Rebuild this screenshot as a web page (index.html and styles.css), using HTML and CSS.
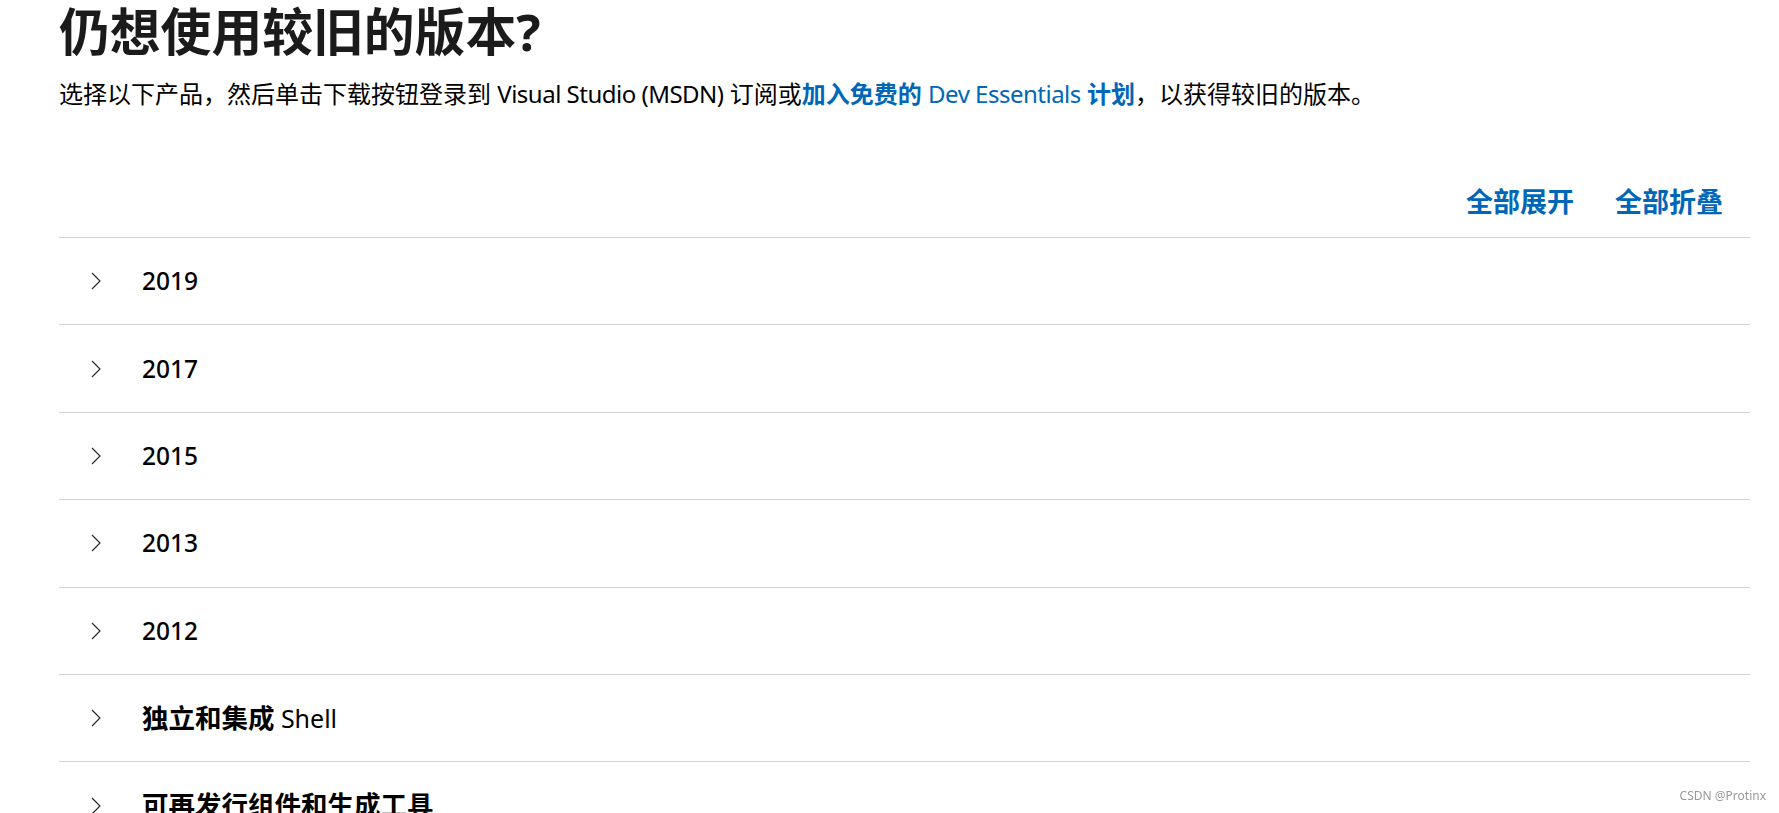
FILE: index.html
```html
<!DOCTYPE html>
<html lang="zh-CN">
<head>
<meta charset="utf-8">
<title>仍想使用较旧的版本?</title>
<link rel="stylesheet" href="styles.css">
</head>
<body>
<main class="page">
  <h1 class="title">仍想使用较旧的版本?</h1>
  <p class="intro">选择以下产品，然后单击下载按钮登录到 <span class="latin">Visual Studio (MSDN)</span> 订阅或<a class="link" href="#"><b class="cjk-bold">加入免费的</b> <span class="latin">Dev Essentials</span> <b class="cjk-bold">计划</b></a>，以获得较旧的版本。</p>

  <div class="toolbar">
    <a class="tool-link" href="#">全部展开</a>
    <a class="tool-link" href="#">全部折叠</a>
  </div>

  <ul class="list">
    <li class="row"><svg class="chev" viewBox="0 0 10 18" width="10" height="18"><polyline points="1,1 9,9 1,17"/></svg><span class="row-title">2019</span></li>
    <li class="row"><svg class="chev" viewBox="0 0 10 18" width="10" height="18"><polyline points="1,1 9,9 1,17"/></svg><span class="row-title">2017</span></li>
    <li class="row"><svg class="chev" viewBox="0 0 10 18" width="10" height="18"><polyline points="1,1 9,9 1,17"/></svg><span class="row-title">2015</span></li>
    <li class="row"><svg class="chev" viewBox="0 0 10 18" width="10" height="18"><polyline points="1,1 9,9 1,17"/></svg><span class="row-title">2013</span></li>
    <li class="row"><svg class="chev" viewBox="0 0 10 18" width="10" height="18"><polyline points="1,1 9,9 1,17"/></svg><span class="row-title">2012</span></li>
    <li class="row"><svg class="chev" viewBox="0 0 10 18" width="10" height="18"><polyline points="1,1 9,9 1,17"/></svg><span class="row-title"><b class="row-cjk">独立和集成</b> <span class="row-latin">Shell</span></span></li>
    <li class="row"><svg class="chev" viewBox="0 0 10 18" width="10" height="18"><polyline points="1,1 9,9 1,17"/></svg><span class="row-title"><b class="row-cjk">可再发行组件和生成工具</b></span></li>
  </ul>
</main>
<div class="watermark">CSDN @Protinx</div>
</body>
</html>
```

FILE: styles.css
```css
html, body {
  margin: 0;
  padding: 0;
  overflow: hidden;
  background: #ffffff;
}

body {
  font-family: "Noto Sans", "Noto Sans CJK SC", sans-serif;
  color: #000000;
}

.page {
  padding: 0 29px 0 59px;
}

.title {
  margin: 0;
  font-size: 50.8px;
  line-height: 64px;
  font-weight: 700;
  color: #1b1b1b;
}

.intro {
  margin: 12px 0 0;
  font-size: 24px;
  line-height: 36px;
  font-weight: 400;
  color: #000000;
}

.latin {
  letter-spacing: -0.5px;
}

.link {
  color: #0067b8;
  text-decoration: none;
}

.cjk-bold {
  font-weight: 700;
}

.toolbar {
  display: flex;
  justify-content: flex-end;
  gap: 41px;
  margin-top: 72px;
  padding: 0 27px 17px 0;
  border-bottom: 1px solid #d2d2d2;
}

.tool-link {
  font-size: 27px;
  line-height: 36px;
  font-weight: 700;
  color: #0067b8;
  text-decoration: none;
}

.list {
  list-style: none;
  margin: 0;
  padding: 0;
}

.row {
  display: flex;
  align-items: center;
  height: 86.4px;
  padding-left: 32px;
  border-bottom: 1px solid #d2d2d2;
}

.chev {
  flex: none;
  fill: none;
  stroke: #2b2b2b;
  stroke-width: 1.2;
}

.row-title {
  margin-left: 41px;
  font-size: 24.5px;
  line-height: 32px;
  font-weight: 500;
  color: #000000;
}

.row-cjk {
  font-size: 26.5px;
  font-weight: 700;
}

.row-latin {
  font-weight: 400;
  font-size: 25px;
}

.watermark {
  position: fixed;
  right: 13px;
  bottom: 9px;
  font-family: "Noto Sans", sans-serif;
  font-size: 12px;
  line-height: 16px;
  color: #999999;
}
```
